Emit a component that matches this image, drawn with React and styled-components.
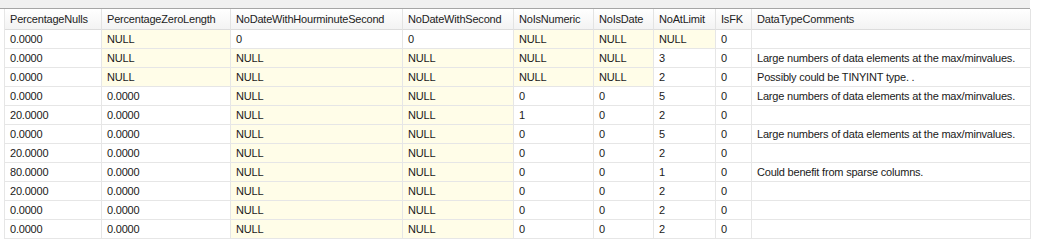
import React from "react";
import styled, { createGlobalStyle } from "styled-components";

const Global = createGlobalStyle`
  html, body { margin: 0; padding: 0; background: #ffffff; }
  body { font-family: "Liberation Sans", Arial, sans-serif; font-size: 11px; letter-spacing: -0.2px; color: #1a1a1a; }
`;

const cols = [97, 129, 172, 111, 80, 60, 62, 36, 279];
const template = cols.map((w) => `${w}px`).join(" ");

const Panel = styled.div`
  width: 1030px;
  display: flex;
  flex-direction: column;
`;

const TopStrip = styled.div`
  height: 8px;
  background: #f0f0f0;
  border-bottom: 1px solid #a5a5a5;
`;

const Grid = styled.div`
  display: grid;
  grid-template-columns: ${template};
  margin-left: 4px;
  border-left: 1px solid #e6e6e6;
`;

const HeaderCell = styled.div`
  height: 20px;
  line-height: 20px;
  padding-left: 5px;
  background: linear-gradient(#ffffff, #f3f3f3);
  border-bottom: 1px solid #dcdcdc;
  border-right: 1px solid #e3e3e3;
  white-space: nowrap;
  overflow: hidden;
  color: #222;
`;

const Cell = styled.div`
  height: 18px;
  line-height: 19px;
  padding-left: 5px;
  background: ${(p) => (p.$null ? "#fffde8" : "#ffffff")};
  border-bottom: 1px solid #e6e6e6;
  border-right: 1px solid #e6e6e6;
  white-space: nowrap;
  overflow: hidden;
  color: #1a1a1a;
`;

const headers = [
  "PercentageNulls",
  "PercentageZeroLength",
  "NoDateWithHourminuteSecond",
  "NoDateWithSecond",
  "NoIsNumeric",
  "NoIsDate",
  "NoAtLimit",
  "IsFK",
  "DataTypeComments",
];

const LN = "Large numbers of data elements at the max/minvalues.";
const rows = [
  ["0.0000", "NULL", "0", "0", "NULL", "NULL", "NULL", "0", ""],
  ["0.0000", "NULL", "NULL", "NULL", "NULL", "NULL", "3", "0", LN],
  ["0.0000", "NULL", "NULL", "NULL", "NULL", "NULL", "2", "0", "Possibly could be TINYINT type. ."],
  ["0.0000", "0.0000", "NULL", "NULL", "0", "0", "5", "0", LN],
  ["20.0000", "0.0000", "NULL", "NULL", "1", "0", "2", "0", ""],
  ["0.0000", "0.0000", "NULL", "NULL", "0", "0", "5", "0", LN],
  ["20.0000", "0.0000", "NULL", "NULL", "0", "0", "2", "0", ""],
  ["80.0000", "0.0000", "NULL", "NULL", "0", "0", "1", "0", "Could benefit from sparse columns."],
  ["20.0000", "0.0000", "NULL", "NULL", "0", "0", "2", "0", ""],
  ["0.0000", "0.0000", "NULL", "NULL", "0", "0", "2", "0", ""],
  ["0.0000", "0.0000", "NULL", "NULL", "0", "0", "2", "0", ""],
];

export default function App() {
  return (
    <>
      <Global />
      <Panel>
        <TopStrip />
        <Grid>
          {headers.map((h) => (
            <HeaderCell key={h}>{h}</HeaderCell>
          ))}
          {rows.map((r, i) =>
            r.map((v, j) => (
              <Cell key={`${i}-${j}`} $null={v === "NULL"}>
                {v}
              </Cell>
            ))
          )}
        </Grid>
      </Panel>
    </>
  );
}
